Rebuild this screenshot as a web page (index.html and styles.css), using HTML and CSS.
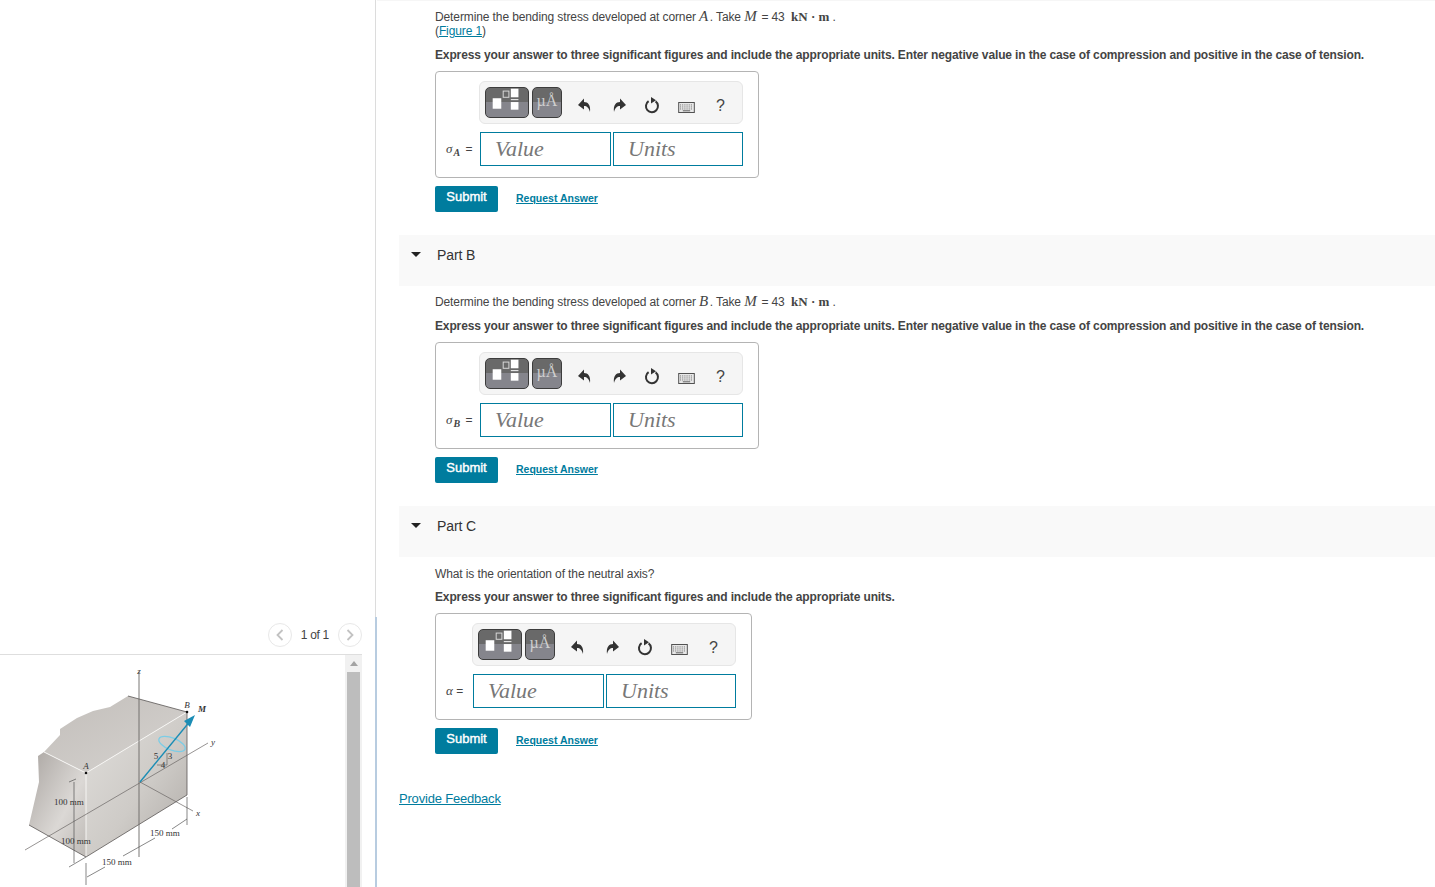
FILE: index.html

```html
<!DOCTYPE html>
<html lang="en">
<head>
    <meta charset="UTF-8">
    <meta name="viewport" content="width=device-width, initial-scale=1.0">
    <title>Bending Stress</title>
    <link rel="stylesheet" href="styles.css">
</head>
<body>
<svg class="icon-defs" width="0" height="0">
    <symbol id="undo" viewBox="0 0 14 16"><path d="M1 8 L7 1.5 V5 C11 5 13.8 8 13 15 C11.8 10.8 10 9 7 9 V12.5 Z"/></symbol>
    <symbol id="redo" viewBox="0 0 14 16"><path d="M13 8 L7 1.5 V5 C3 5 0.2 8 1 15 C2.2 10.8 4 9 7 9 V12.5 Z"/></symbol>
    <symbol id="reset" viewBox="0 0 16 18"><path d="M7 1 L7 7.4 L12 4.2 Z" fill="#333"/><path d="M4.6 5.2 A6 6 0 1 0 11.6 5.4" fill="none" stroke="#333" stroke-width="2"/></symbol>
    <symbol id="keyboard" viewBox="0 0 18 12"><rect x="0.5" y="0.5" width="17" height="11" fill="#e8e8e8" stroke="#444"/><path d="M2 3.2 H16 M2 5.4 H16 M2 7.6 H16" stroke="#666" stroke-dasharray="1 1"/><path d="M5 9.6 H13" stroke="#555"/></symbol>
    <symbol id="matrix" viewBox="0 0 44 32">
        <rect x="7" y="11" width="9" height="11" fill="#fff"/>
        <rect x="18" y="3.5" width="6" height="6.5" fill="none" stroke="#ddd"/>
        <rect x="26" y="1" width="8" height="9" fill="#fff"/>
        <rect x="26" y="12" width="8" height="1" fill="#fff"/>
        <rect x="26" y="15" width="8" height="8" fill="#fff"/>
    </symbol>
</svg>

<aside class="side">
    <div class="figure-panel">
        <div class="pager">
            <span class="pager-btn">
                <svg width="8" height="12" viewBox="0 0 8 12"><path d="M6.5 1 L1.5 6 L6.5 11" fill="none" stroke="#c2c2c2" stroke-width="1.8"/></svg>
            </span>
            <span class="pager-text">1 of 1</span>
            <span class="pager-btn">
                <svg width="8" height="12" viewBox="0 0 8 12"><path d="M1.5 1 L6.5 6 L1.5 11" fill="none" stroke="#c2c2c2" stroke-width="1.8"/></svg>
            </span>
        </div>
        <div class="figure-view">
            <svg class="figure" width="345" height="232" viewBox="0 0 345 232">
                <defs>
                    <linearGradient id="top-face" x1="0" y1="0" x2="1" y2="1">
                        <stop offset="0" stop-color="#c2beba"/>
                        <stop offset="1" stop-color="#d6d3d0"/>
                    </linearGradient>
                    <linearGradient id="left-face" x1="0" y1="0" x2="1" y2="1">
                        <stop offset="0" stop-color="#aaa5a1"/>
                        <stop offset="0.6" stop-color="#dbd8d5"/>
                        <stop offset="1" stop-color="#bdb9b5"/>
                    </linearGradient>
                    <linearGradient id="right-face" x1="0" y1="0" x2="1" y2="1">
                        <stop offset="0" stop-color="#e0dedb"/>
                        <stop offset="0.55" stop-color="#cecbc7"/>
                        <stop offset="1" stop-color="#aeaaa6"/>
                    </linearGradient>
                </defs>
                <path d="M128 41 L187 57 L86 118 L44 97 L60 80 L60 74 L77 63 L93 56 L110 52 Z" fill="url(#top-face)"/>
                <path d="M44 97 L38 101 L39 127 L29 170 L86 202 L86 118 Z" fill="url(#left-face)"/>
                <path d="M86 118 L187 57 L187 140 L86 202 Z" fill="url(#right-face)"/>
                <path d="M44 97 L86 118 L187 57 M86 118 V202" fill="none" stroke="#f6f5f3" stroke-width="1"/>
                <path d="M128 41 L187 57 V140" fill="none" stroke="#5a5755" stroke-width="0.8"/>
                <path d="M29 170 L86 202 L187 140" fill="none" stroke="#5a5755" stroke-width="0.8"/>
                <path d="M139 17 V202" stroke="#6a6664" stroke-width="0.9"/>
                <path d="M25 195 L208 88 M140 127 L193 156" stroke="#6a6664" stroke-width="0.7" fill="none"/>
                <path d="M69 127 L76 124 M74 127 V208 M69 212 L86 202 M86 208 V230 M87 222 L105 212 M123 201 L155 183 M172 174 L187 164 M187 142 V170" stroke="#555" stroke-width="0.7" fill="none"/>
                <path d="M167 98 V110 M157 110 L167 110" stroke="#555" stroke-width="0.6" fill="none"/>
                <ellipse cx="172" cy="89" rx="14" ry="6" transform="rotate(22 172 89)" fill="none" stroke="#7ccde6" stroke-width="1.3"/>
                <path d="M140 127 L191 65" stroke="#1b8db5" stroke-width="1.4"/>
                <path d="M195 60 L184 66 L190 72 Z" fill="#1b8db5"/>
                <circle cx="187" cy="57" r="1.3" fill="#111"/>
                <circle cx="86" cy="118" r="1.3" fill="#111"/>
                <g class="fig-label">
                    <text x="139" y="19" class="fig-italic">z</text>
                    <text x="187" y="53" class="fig-italic">B</text>
                    <text x="202" y="57" class="fig-italic fig-bold">M</text>
                    <text x="213" y="90" class="fig-italic">y</text>
                    <text x="198" y="161" class="fig-italic">x</text>
                    <text x="86" y="114" class="fig-italic">A</text>
                    <text x="156" y="104">5</text>
                    <text x="170" y="104">3</text>
                    <text x="163" y="113">4</text>
                    <text x="69" y="150">100 mm</text>
                    <text x="76" y="189">100 mm</text>
                    <text x="165" y="181">150 mm</text>
                    <text x="117" y="210">150 mm</text>
                </g>
            </svg>
            <div class="scrollbar">
                <span class="scroll-arrow"></span>
                <span class="scroll-thumb"></span>
            </div>
        </div>
    </div>
    <div class="divider"></div>
</aside>

<main class="content">
    <section class="part-body first">
        <p>Determine the bending stress developed at corner <i class="math">A</i>. Take <i class="math">M</i> = 43 &nbsp;<span class="unit">kN · m</span> .</p>
        <p><span>(</span><a href="#" class="link">Figure 1</a><span>)</span></p>
        <p class="instr">Express your answer to three significant figures and include the appropriate units. Enter negative value in the case of compression and positive in the case of tension.</p>
        <div class="answer-box wide">
            <div class="toolbar">
                <span class="tool-btn matrix-btn"><svg width="44" height="32"><use href="#matrix"/></svg></span>
                <span class="tool-btn unit-btn">µÅ</span>
                <span class="tool-icons">
                    <svg class="tool-icon" width="14" height="16"><use href="#undo"/></svg>
                    <svg class="tool-icon redo" width="14" height="16"><use href="#redo"/></svg>
                    <svg class="tool-icon" width="16" height="18"><use href="#reset"/></svg>
                    <svg class="tool-icon keys" width="17" height="11"><use href="#keyboard"/></svg>
                    <span class="help">?</span>
                </span>
            </div>
            <div class="answer-row">
                <span class="symbol"><i>σ</i><sub>A</sub> =</span>
                <input class="field" type="text" placeholder="Value">
                <input class="field" type="text" placeholder="Units">
            </div>
        </div>
        <div class="actions">
            <button class="submit">Submit</button>
            <a href="#" class="link request">Request Answer</a>
        </div>
    </section>

    <header class="part-head"><span class="caret"></span>Part B</header>
    <section class="part-body">
        <p>Determine the bending stress developed at corner <i class="math">B</i>. Take <i class="math">M</i> = 43 &nbsp;<span class="unit">kN · m</span> .</p>
        <p class="instr">Express your answer to three significant figures and include the appropriate units. Enter negative value in the case of compression and positive in the case of tension.</p>
        <div class="answer-box wide">
            <div class="toolbar">
                <span class="tool-btn matrix-btn"><svg width="44" height="32"><use href="#matrix"/></svg></span>
                <span class="tool-btn unit-btn">µÅ</span>
                <span class="tool-icons">
                    <svg class="tool-icon" width="14" height="16"><use href="#undo"/></svg>
                    <svg class="tool-icon redo" width="14" height="16"><use href="#redo"/></svg>
                    <svg class="tool-icon" width="16" height="18"><use href="#reset"/></svg>
                    <svg class="tool-icon keys" width="17" height="11"><use href="#keyboard"/></svg>
                    <span class="help">?</span>
                </span>
            </div>
            <div class="answer-row">
                <span class="symbol"><i>σ</i><sub>B</sub> =</span>
                <input class="field" type="text" placeholder="Value">
                <input class="field" type="text" placeholder="Units">
            </div>
        </div>
        <div class="actions">
            <button class="submit">Submit</button>
            <a href="#" class="link request">Request Answer</a>
        </div>
    </section>

    <header class="part-head"><span class="caret"></span>Part C</header>
    <section class="part-body">
        <p class="plain-line">What is the orientation of the neutral axis?</p>
        <p class="instr tight">Express your answer to three significant figures and include the appropriate units.</p>
        <div class="answer-box narrow">
            <div class="toolbar">
                <span class="tool-btn matrix-btn"><svg width="44" height="32"><use href="#matrix"/></svg></span>
                <span class="tool-btn unit-btn">µÅ</span>
                <span class="tool-icons">
                    <svg class="tool-icon" width="14" height="16"><use href="#undo"/></svg>
                    <svg class="tool-icon redo" width="14" height="16"><use href="#redo"/></svg>
                    <svg class="tool-icon" width="16" height="18"><use href="#reset"/></svg>
                    <svg class="tool-icon keys" width="17" height="11"><use href="#keyboard"/></svg>
                    <span class="help">?</span>
                </span>
            </div>
            <div class="answer-row">
                <span class="symbol"><i>α</i> =</span>
                <input class="field" type="text" placeholder="Value">
                <input class="field" type="text" placeholder="Units">
            </div>
        </div>
        <div class="actions">
            <button class="submit">Submit</button>
            <a href="#" class="link request">Request Answer</a>
        </div>
    </section>

    <a href="#" class="link feedback">Provide Feedback</a>
</main>
</body>
</html>
```

FILE: styles.css

```css
html, body {
    height: 100%;
}
body {
    font-family: "Liberation Sans", Arial, sans-serif;
    font-size: 12px;
    color: #444;
    background-color: white;
    margin: 0;
    display: flex;
    overflow: hidden;
}
.icon-defs {
    position: absolute;
}

/* left figure column */
.side {
    width: 377px;
    height: 887px;
    flex-shrink: 0;
    display: flex;
}
.figure-panel {
    width: 362px;
    margin-right: 13px;
    display: flex;
    flex-direction: column;
    justify-content: flex-end;
}
.divider {
    width: 2px;
    background:
        linear-gradient(to right, transparent 1px, white 1px) 0 0 / 100% 617px no-repeat,
        linear-gradient(#dcdcdc 617px, #b8cce0 617px);
}
.pager {
    display: flex;
    align-items: center;
    justify-content: flex-end;
    gap: 9px;
    height: 24px;
    margin-bottom: 7px;
}
.pager-btn {
    width: 24px;
    height: 24px;
    box-sizing: border-box;
    border: 1px solid #e8e8e8;
    border-radius: 50%;
    display: flex;
    align-items: center;
    justify-content: center;
}
.pager-text {
    color: #444;
    letter-spacing: -0.3px;
}
.figure-view {
    display: flex;
    height: 232px;
    border-top: 1px solid #dedede;
}
.figure {
    display: block;
    flex-shrink: 0;
}
.fig-label text {
    font-family: "Liberation Serif", serif;
    font-size: 9px;
    fill: #333;
    text-anchor: middle;
}
.fig-label .fig-italic {
    font-style: italic;
}
.fig-label .fig-bold {
    font-weight: bold;
}
.scrollbar {
    width: 17px;
    background: #f1f1f1;
    display: flex;
    flex-direction: column;
    align-items: center;
}
.scroll-arrow {
    width: 0;
    height: 0;
    margin-top: 6px;
    border-left: 4px solid transparent;
    border-right: 4px solid transparent;
    border-bottom: 5px solid #a3a3a3;
}
.scroll-thumb {
    width: 13px;
    flex: 1;
    margin-top: 6px;
    background: #bdbdbd;
}

/* question column */
.content {
    flex: 1;
    min-width: 0;
    padding-left: 22px;
    border-top: 1px solid #f6f6f6;
    box-sizing: border-box;
    height: 887px;
}
.part-body {
    padding: 9px 0 0 36px;
}
.part-body p {
    margin: 0;
    line-height: 14px;
    white-space: nowrap;
    letter-spacing: -0.11px;
}
.part-body .instr {
    margin-top: 10px;
    font-weight: bold;
    letter-spacing: -0.134px;
    color: #444;
}
.part-body .plain-line {
    margin-top: 1px;
}
.part-body .instr.tight {
    margin-top: 9px;
}
.math {
    font-family: "Liberation Serif", serif;
    font-size: 15px;
    line-height: 0;
    letter-spacing: 1.5px;
}
.unit {
    font-family: "Liberation Serif", serif;
    font-size: 13px;
    line-height: 0;
    font-weight: bold;
    letter-spacing: 0;
}
.link {
    color: #007c9e;
    text-decoration: underline;
}
.answer-box {
    margin-top: 9px;
    height: 107px;
    box-sizing: border-box;
    border: 1px solid #b4b4b4;
    border-radius: 4px;
    padding: 9px 0 0 10px;
}
.answer-box.wide {
    width: 324px;
}
.answer-box.narrow {
    width: 317px;
}
.toolbar {
    width: 264px;
    height: 43px;
    box-sizing: border-box;
    margin-left: 33px;
    padding: 5px 0 0 5px;
    background: #f5f5f5;
    border: 1px solid #e6e6e6;
    border-radius: 6px;
    display: flex;
    gap: 3px;
}
.narrow .toolbar {
    margin-left: 26px;
}
.tool-btn {
    height: 31px;
    box-sizing: border-box;
    border: 1px solid #3c3c3c;
    border-radius: 5px;
    background: linear-gradient(#696969 50%, #85858c 50%);
    display: flex;
    align-items: center;
    justify-content: center;
}
.matrix-btn {
    width: 44px;
}
.unit-btn {
    width: 30px;
    padding-bottom: 4px;
    font-family: "Liberation Serif", serif;
    font-size: 16px;
    color: #cfcfcf;
}
.tool-icons {
    flex: 1;
    display: flex;
    align-items: center;
    justify-content: space-between;
    padding: 0 17px 0 12px;
    height: 38px;
    margin-top: -1px;
}
.tool-icon {
    fill: #333;
}
.redo {
    margin-left: 4px;
}
.keys {
    margin: 4px 4px 0 0;
}
.help {
    font-size: 16px;
    color: #444;
    margin-top: 2px;
}
.answer-row {
    display: flex;
    align-items: center;
    margin-top: 8px;
}
.symbol {
    width: 34px;
    flex-shrink: 0;
    font-size: 12px;
    white-space: nowrap;
}
.narrow .symbol {
    width: 27px;
}
.symbol i {
    font-family: "Liberation Serif", serif;
    font-size: 13px;
}
.symbol sub {
    font-family: "Liberation Serif", serif;
    font-size: 10px;
    line-height: 0;
    margin: 0 2px 0 1px;
    font-style: italic;
    font-weight: bold;
}
.field {
    width: 131px;
    height: 34px;
    box-sizing: border-box;
    margin: 0 2px 0 0;
    padding: 0 14px;
    border: 1px solid #007c9e;
    border-radius: 0;
    font-family: "Liberation Serif", serif;
    font-size: 22px;
    font-style: italic;
}
.field + .field {
    width: 130px;
}
.field::placeholder {
    color: #777;
    opacity: 1;
}
.actions {
    display: flex;
    align-items: center;
    gap: 18px;
    margin-top: 8px;
}
.submit {
    width: 63px;
    height: 26px;
    padding: 0 0 6px;
    border: 0;
    border-radius: 2px;
    background: #007c9e;
    color: white;
    font-family: "Liberation Sans", Arial, sans-serif;
    font-size: 13px;
    -webkit-text-stroke: 0.4px white;
}
.request {
    font-size: 10.5px;
    font-weight: bold;
    padding-bottom: 2px;
}
.part-head {
    margin-top: 23px;
    height: 51px;
    box-sizing: border-box;
    padding: 0 0 12px 12px;
    background: #f9f9f9;
    display: flex;
    align-items: center;
    font-size: 14px;
    letter-spacing: -0.1px;
    color: #333;
}
.caret {
    width: 0;
    height: 0;
    margin-right: 16px;
    border-left: 5px solid transparent;
    border-right: 5px solid transparent;
    border-top: 5px solid #222;
}
.feedback {
    display: inline-block;
    margin-top: 37px;
    font-size: 13px;
    letter-spacing: -0.19px;
}
```
